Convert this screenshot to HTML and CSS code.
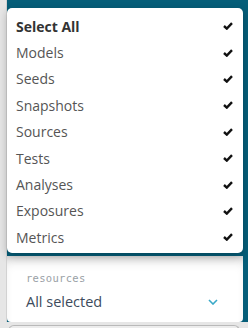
FILE: index.html
```html
<!DOCTYPE html>
<html lang="en">
<head>
  <meta charset="UTF-8">
  <meta name="viewport" content="width=device-width, initial-scale=1.0">
  <title>Resource filter</title>
  <link rel="stylesheet" href="styles.css">
</head>
<body>
  <div class="panel">
    <div class="select-card">
      <div class="select-label">resources</div>
      <div class="select-value">
        <span>All selected</span>
        <svg class="chevron" width="10" height="6" viewBox="0 0 10 6"><path d="M1 1l4 4 4-4" fill="none" stroke="#3aa9c8" stroke-width="1.6"/></svg>
      </div>
    </div>
  </div>
  <div class="next-card"></div>

  <ul class="dropdown" id="dropdown"></ul>

  <script>
    const options = ["Select All", "Models", "Seeds", "Snapshots", "Sources", "Tests", "Analyses", "Exposures", "Metrics"];
    const dropdown = document.getElementById("dropdown");

    options.forEach((name, i) => {
      const li = document.createElement("li");
      li.className = i === 0 ? "option option-all" : "option";
      li.innerHTML = `
        <span>${name}</span>
        <svg class="check" width="10" height="8" viewBox="0 0 10 8"><path d="M1 4l2.8 2.6L9 1.2" fill="none" stroke="#111" stroke-width="2.4"/></svg>
      `;
      dropdown.appendChild(li);
    });
  </script>
</body>
</html>
```

FILE: styles.css
```css
body {
  margin: 0;
  width: 248px;
  height: 328px;
  overflow: hidden;
  background-color: #e6e6e6;
  font-family: "Open Sans", sans-serif;
  position: relative;
}
.panel {
  margin-left: 6px;
  height: 322px;
  background-color: #055e79;
  padding-top: 256px;
  padding-right: 5px;
  box-sizing: border-box;
  border-left: 1px solid #d2d2d2;
}
.select-card {
  height: 66px;
  background: #fff;
  border-radius: 0 0 4px 4px;
  box-shadow: inset 0 10px 12px -6px rgba(0,0,0,0.18);
  padding: 16px 0 0 19px;
  box-sizing: border-box;
}
.select-label {
  font-family: "DejaVu Sans Mono", monospace;
  font-size: 10.5px;
  color: #9a9fa6;
  letter-spacing: 0.3px;
}
.select-value {
  display: flex;
  align-items: center;
  justify-content: space-between;
  margin-top: 8px;
  padding-right: 25px;
  font-size: 14.5px;
  color: #3d4b5c;
}
.next-card {
  margin: 3px 8px 0 8px;
  height: 6px;
  border: 1px solid #b9b9b9;
  border-bottom: none;
  border-radius: 6px 6px 0 0;
  background: #ececec;
}
.dropdown {
  position: absolute;
  left: 7px;
  top: 8px;
  width: 236px;
  height: 245px;
  margin: 0;
  padding: 5px 0 3px;
  box-sizing: border-box;
  list-style: none;
  background: #fff;
  border-radius: 5px;
  box-shadow: 0 3px 8px rgba(0,0,0,0.25);
}
.option {
  display: flex;
  align-items: center;
  justify-content: space-between;
  height: 26.4px;
  padding: 0 10px 0 9px;
  font-size: 14px;
  color: #555;
}
.option-all {
  font-weight: 700;
  color: #333;
}
.check {
  display: block;
}
```
